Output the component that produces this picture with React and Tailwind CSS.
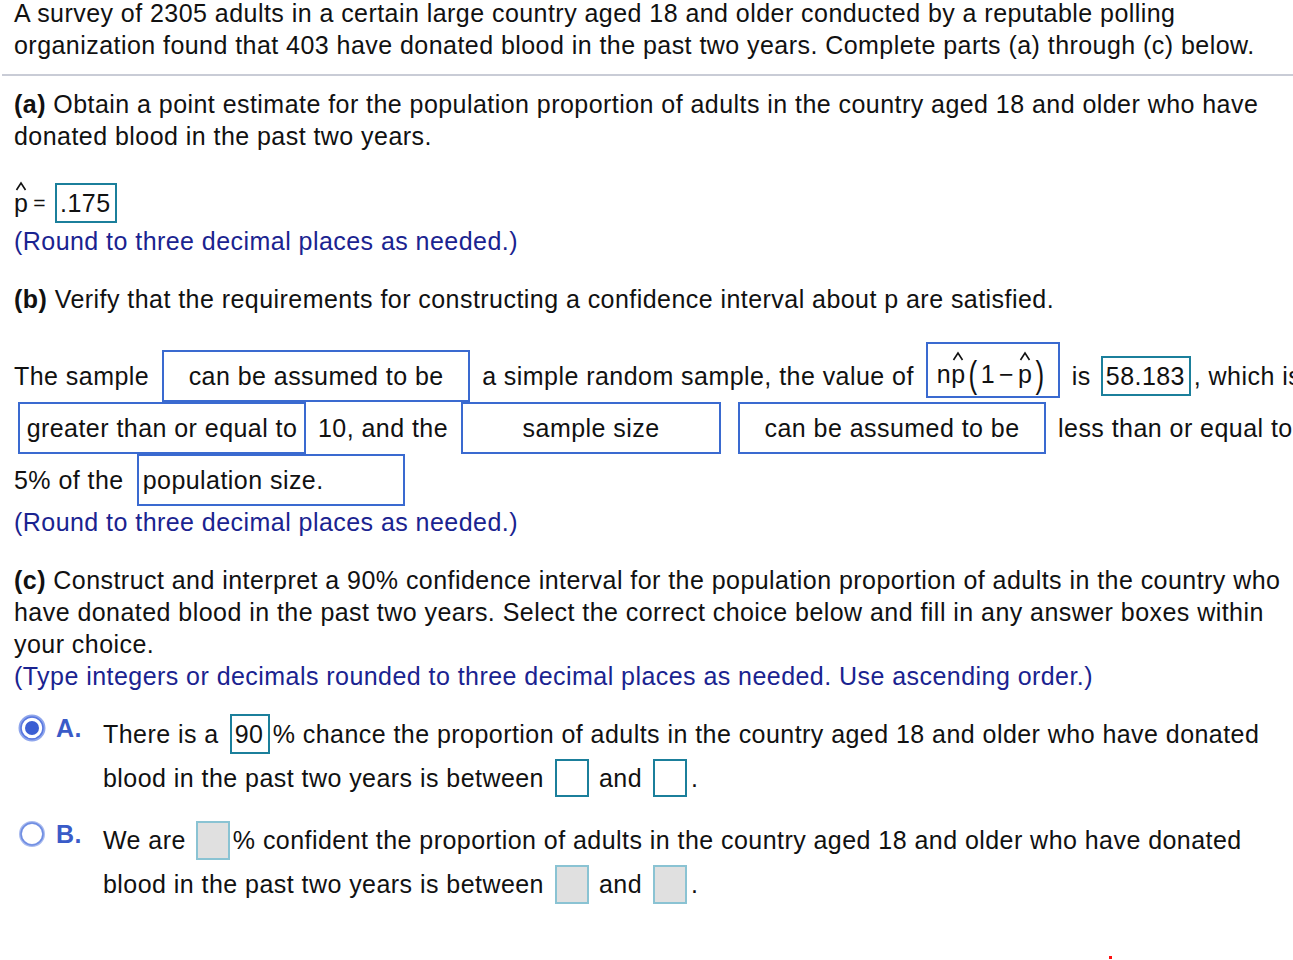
import React from "react";

// small chevron accent drawn over a letter (p-hat)
function Hat({ children, top = "-top-[8px]" }) {
  return (
    <span className="relative inline-block">
      {children}
      <svg
        className={`absolute left-1/2 -translate-x-1/2 ${top}`}
        width="12"
        height="10"
        viewBox="0 0 12 10"
      >
        <polyline points="1.5,9 6,2 10.5,9" fill="none" stroke="#111" strokeWidth="1.6" />
      </svg>
    </span>
  );
}

function Drop({ className = "", children }) {
  return (
    <div
      className={`flex h-[52px] shrink-0 items-center border-2 border-[#3a6ad0] ${className}`}
    >
      {children}
    </div>
  );
}

function Ans({ className = "", children }) {
  return (
    <div className={`flex shrink-0 items-center border-2 border-[#1b7f9b] px-[3px] ${className}`}>
      {children}
    </div>
  );
}

function Gray({ className = "" }) {
  return <div className={`shrink-0 border-2 border-[#8ac3d3] bg-[#e0e0e0] ${className}`} />;
}

function Radio({ checked }) {
  return (
    <svg width="28" height="28" viewBox="0 0 28 28" className="mt-[2px] ml-[4px] shrink-0">
      {checked ? (
        <>
          <circle cx="14" cy="14" r="12" fill="none" stroke="#8fa6ec" strokeWidth="3" />
          <circle cx="14" cy="14" r="11" fill="none" stroke="#5a78df" strokeWidth="1.5" />
          <circle cx="14" cy="14" r="7" fill="#3b5ed3" />
        </>
      ) : (
        <>
          <circle cx="14" cy="14" r="11.5" fill="none" stroke="#a9bbef" strokeWidth="3" />
          <circle cx="14" cy="14" r="11" fill="none" stroke="#6f8de2" strokeWidth="1.5" />
        </>
      )}
    </svg>
  );
}

const blue = "text-[#1a2390]";

export default function App() {
  return (
    <div className="relative h-[960px] w-[1293px] overflow-hidden bg-white font-['Liberation_Sans',Arial,sans-serif] text-[25px] leading-[32px] tracking-[0.45px] text-[#111]">
      {/* Intro */}
      <div className="mt-[-3px] whitespace-nowrap px-[14px]">
        <p>
          A survey of 2305 adults in a certain large country aged 18 and older conducted by a reputable polling
        </p>
        <p>organization found that 403 have donated blood in the past two years. Complete parts (a) through (c) below.</p>
      </div>
      <div className="mt-[13px] ml-[2px] h-[2px] bg-[#c9ccd6]" />

      <div className="px-[14px]">
        {/* Part a */}
        <p className="mt-[12px] whitespace-nowrap">
          <span className="font-bold">(a)</span> Obtain a point estimate for the population proportion of adults in the
          country aged 18 and older who have
          <br />
          donated blood in the past two years.
        </p>
        <div className="mt-[31px] flex h-[40px] items-center">
          <Hat top="-top-[6px]">p</Hat>
          <span className="ml-[5px] text-[21px]">=</span>
          <Ans className="ml-[9px] h-[40px] w-[62px]">.175</Ans>
        </div>
        <p className={`mt-[2px] ${blue}`}>(Round to three decimal places as needed.)</p>

        {/* Part b */}
        <p className="mt-[26px] whitespace-nowrap">
          <span className="font-bold">(b)</span> Verify that the requirements for constructing a confidence interval
          about p are satisfied.
        </p>

        <div className="mt-[35px] flex h-[52px] items-center whitespace-nowrap">
          <span className="shrink-0">The sample</span>
          <Drop className="ml-[13px] w-[308px] justify-center">can be assumed to be</Drop>
          <span className="ml-[12px] shrink-0">a simple random sample, the value of</span>
          <div className="mb-[12px] ml-[12px] flex h-[56px] w-[134px] shrink-0 items-center border-2 border-[#3a6ad0] pl-[9px] pt-[8px]">
            <span>n</span>
            <Hat top="-top-[7px]">p</Hat>
            <span className="mx-[3px] inline-block scale-y-[1.4] text-[26px]">(</span>
            <span>1</span>
            <span className="mx-[4px]">−</span>
            <Hat top="-top-[7px]">p</Hat>
            <span className="ml-[3px] inline-block scale-y-[1.4] text-[26px]">)</span>
          </div>
          <span className="ml-[12px] shrink-0">is</span>
          <Ans className="ml-[10px] h-[40px] w-[90px]">58.183</Ans>
          <span className="ml-[3px] shrink-0">, which is</span>
        </div>

        <div className="flex h-[52px] items-center whitespace-nowrap pl-[4px]">
          <Drop className="w-[288px] justify-center">greater than or equal to</Drop>
          <span className="ml-[12px] shrink-0">10, and the</span>
          <Drop className="ml-[13px] w-[260px] justify-center">sample size</Drop>
          <Drop className="ml-[17px] w-[308px] justify-center">can be assumed to be</Drop>
          <span className="ml-[12px] shrink-0">less than or equal to</span>
        </div>

        <div className="flex h-[52px] items-center whitespace-nowrap">
          <span className="shrink-0">5% of the</span>
          <Drop className="ml-[13px] w-[268px] justify-start pl-[4px]">population size.</Drop>
        </div>
        <p className={blue}>(Round to three decimal places as needed.)</p>

        {/* Part c */}
        <p className="mt-[26px] whitespace-nowrap">
          <span className="font-bold">(c)</span> Construct and interpret a 90% confidence interval for the population
          proportion of adults in the country who
          <br />
          have donated blood in the past two years. Select the correct choice below and fill in any answer boxes within
          <br />
          your choice.
        </p>
        <p className={`whitespace-nowrap ${blue}`}>
          (Type integers or decimals rounded to three decimal places as needed. Use ascending order.)
        </p>

        {/* Choice A */}
        <div className="mt-[20px] flex whitespace-nowrap">
          <div className="flex w-[89px] shrink-0 items-start">
            <Radio checked />
            <span className="ml-[10px] font-bold text-[#3a5bc8]">A.</span>
          </div>
          <div>
            <div className="flex h-[44px] items-center">
              <span>There is a</span>
              <Ans className="ml-[11px] h-[40px] w-[40px]">90</Ans>
              <span className="ml-[3px]">% chance the proportion of adults in the country aged 18 and older who have donated</span>
            </div>
            <div className="flex h-[44px] items-center">
              <span>blood in the past two years is between</span>
              <Ans className="ml-[11px] h-[38px] w-[34px]" />
              <span className="ml-[10px]">and</span>
              <Ans className="ml-[11px] h-[38px] w-[34px]" />
              <span className="ml-[4px]">.</span>
            </div>
          </div>
        </div>

        {/* Choice B */}
        <div className="mt-[18px] flex whitespace-nowrap">
          <div className="flex w-[89px] shrink-0 items-start">
            <Radio />
            <span className="ml-[10px] font-bold text-[#3a5bc8]">B.</span>
          </div>
          <div>
            <div className="flex h-[44px] items-center">
              <span>We are</span>
              <Gray className="ml-[10px] h-[39px] w-[34px]" />
              <span className="ml-[3px]">% confident the proportion of adults in the country aged 18 and older who have donated</span>
            </div>
            <div className="flex h-[44px] items-center">
              <span>blood in the past two years is between</span>
              <Gray className="ml-[11px] h-[39px] w-[34px]" />
              <span className="ml-[10px]">and</span>
              <Gray className="ml-[11px] h-[39px] w-[34px]" />
              <span className="ml-[4px]">.</span>
            </div>
          </div>
        </div>
      </div>

      <div className="absolute left-[1109px] top-[956px] h-[3px] w-[3px] bg-[#ff1010]" />
    </div>
  );
}
